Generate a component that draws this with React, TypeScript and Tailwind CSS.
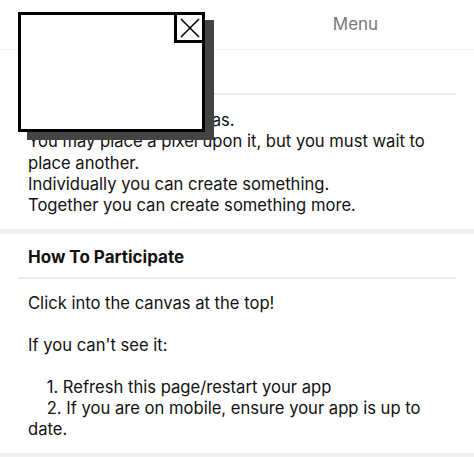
import React from "react";

export default function App() {
  const font = { fontFamily: "Inter, 'Noto Sans', sans-serif" };
  return (
    <div className="relative w-[474px] h-[457px] overflow-hidden bg-white text-[#111]" style={font}>
      <header className="flex h-[50px] border-b border-[#f0f0f0]">
        <div className="flex-1 flex items-center justify-center text-[17px] text-[#777]"></div>
        <div className="flex-1 flex items-center justify-center text-[17px] text-[#777]">Menu</div>
      </header>

      <section className="bg-white">
        <div className="mx-[18px] h-[45px] border-b-2 border-[#ececec] flex items-center px-[10px] font-bold text-[17px]">
          Place
        </div>
        <div className="px-[28px] pt-[15px] pb-[13px] text-[16.6px] leading-[21.25px]">
          There is an empty canvas.
          <br />
          You may place a pixel upon it, but you must wait to place another.
          <br />
          Individually you can create something.
          <br />
          Together you can create something more.
        </div>
      </section>

      <div className="h-[5px] bg-[#f0f0f0]" />

      <section className="bg-white">
        <div className="mx-[18px] h-[45px] border-b-2 border-[#ececec] flex items-center pt-[4px] px-[10px] font-bold text-[17px]">
          How To Participate
        </div>
        <div className="px-[28px] pt-[14px] pb-[13px] text-[16.6px] leading-[21px] whitespace-pre-wrap">
          {"Click into the canvas at the top!\n\nIf you can't see it:\n\n    1. Refresh this page/restart your app\n    2. If you are on mobile, ensure your app is up to date."}
        </div>
      </section>
      <div className="h-[5px] bg-[#f0f0f0]" />

      <div className="absolute left-[18px] top-[12px] w-[187px] h-[120px] border-[3px] border-black bg-white shadow-[9px_8px_0_#444]">
        <button className="absolute right-0 top-0 w-[28px] h-[28px] border-l-[3px] border-b-[3px] border-black bg-white flex items-center justify-center">
          <svg width="20" height="20" viewBox="0 0 20 20">
            <path d="M1 1 L19 19 M19 1 L1 19" stroke="#000" strokeWidth="1.6" fill="none" />
          </svg>
        </button>
      </div>
    </div>
  );
}
